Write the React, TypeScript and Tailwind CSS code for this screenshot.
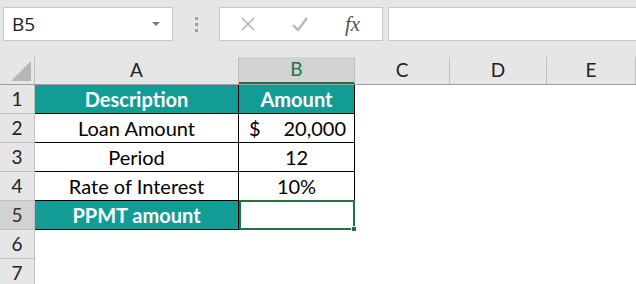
import React from "react";

const cols = ["A", "B", "C", "D", "E"];
const colW = ["w-[204px]", "w-[116px]", "w-[95px]", "w-[97px]", "flex-1"];

const rows = [
  { n: 1, a: "Description", b: "Amount", head: true },
  { n: 2, a: "Loan Amount", b: "20,000", money: true },
  { n: 3, a: "Period", b: "12" },
  { n: 4, a: "Rate of Interest", b: "10%" },
  { n: 5, a: "PPMT amount", b: "", head: true, sel: true },
  { n: 6 },
  { n: 7 },
];

const App = () => {
  return (
    <div className="w-[636px] h-[284px] overflow-hidden bg-white font-['Lato','Open_Sans',sans-serif]">
      {/* formula bar */}
      <div className="h-[57px] bg-[#e6e6e6] flex items-start pt-[7px] pl-[3px]">
        <div className="w-[170px] h-[34px] bg-white border border-[#c6c6c6] flex items-center justify-between pl-2 pr-3">
          <span className="text-[19px] text-[#222] font-['Open_Sans',sans-serif]">B5</span>
          <span className="w-0 h-0 border-l-[4px] border-r-[4px] border-t-[4px] border-l-transparent border-r-transparent border-t-[#777]" />
        </div>
        <div className="w-[46px] h-[34px] flex flex-col items-center justify-center gap-[3px]">
          <span className="w-[3px] h-[3px] bg-[#a0a0a0]" />
          <span className="w-[3px] h-[3px] bg-[#a0a0a0]" />
          <span className="w-[3px] h-[3px] bg-[#a0a0a0]" />
        </div>
        <div className="w-[164px] h-[34px] bg-white border border-[#c6c6c6] flex items-center">
          <svg width="16" height="16" viewBox="0 0 16 16" className="ml-[20px]">
            <path d="M2 2 L14 14 M14 2 L2 14" stroke="#b4b4b4" strokeWidth="1.6" />
          </svg>
          <svg width="18" height="16" viewBox="0 0 18 16" className="ml-[35px]">
            <path d="M2 9 L7 14 L16 2" stroke="#b8b8b8" strokeWidth="2.4" fill="none" />
          </svg>
          <span className="ml-[36px] text-[21px] italic text-[#555] font-['Liberation_Serif',serif] leading-none">
            fx
          </span>
        </div>
        <div className="ml-[5px] flex-1 h-[34px] bg-white border border-[#c6c6c6] border-r-0" />
      </div>

      {/* column header */}
      <div className="flex h-[28px] bg-[#e6e6e6] border-b border-[#9f9f9f]">
        <div className="w-[35px] relative border-r border-[#c0c0c0]">
          <div className="absolute right-[3px] bottom-[3px] w-0 h-0 border-l-[20px] border-b-[20px] border-l-transparent border-b-[#b6b6b6]" />
        </div>
        {cols.map((c, i) => (
          <div
            key={c}
            className={`${colW[i]} flex items-center justify-center text-[19px] border-r border-[#c0c0c0] ${
              c === "B" ? "bg-[#d2d2d2] text-[#217346] border-b-2 border-b-[#217346]" : "text-[#222]"
            }`}
          >
            {c}
          </div>
        ))}
      </div>

      {/* rows */}
      {rows.map((r) => (
        <div key={r.n} className="flex h-[29px]">
          <div
            className={`w-[35px] flex items-center justify-center text-[19px] border-r border-b border-[#c0c0c0] ${
              r.sel ? "bg-[#d2d2d2] text-[#333]" : "bg-[#e6e6e6] text-[#222]"
            }`}
          >
            {r.n}
          </div>
          {r.a !== undefined ? (
            <>
              <div
                className={`w-[204px] flex items-center justify-center text-[20px] border-b border-r border-black ${
                  r.head ? "bg-[#139b95] text-white font-bold" : "text-black"
                }`}
              >
                {r.a}
              </div>
              {r.sel ? (
                <div className="w-[116px] relative border-2 border-[#217346] -mt-px">
                  <span className="absolute -right-[4px] -bottom-[4px] w-[6px] h-[6px] bg-[#217346] border border-white" />
                </div>
              ) : (
                <div
                  className={`w-[116px] flex items-center text-[20px] border-b border-r border-black ${
                    r.head ? "bg-[#139b95] text-white font-bold" : "text-black"
                  } ${r.money ? "justify-between pl-[10px] pr-[8px]" : "justify-center"}`}
                >
                  {r.money ? (
                    <>
                      <span>$</span>
                      <span>{r.b}</span>
                    </>
                  ) : (
                    r.b
                  )}
                </div>
              )}
            </>
          ) : null}
          <div className="flex-1" />
        </div>
      ))}
    </div>
  );
};

export default App;
